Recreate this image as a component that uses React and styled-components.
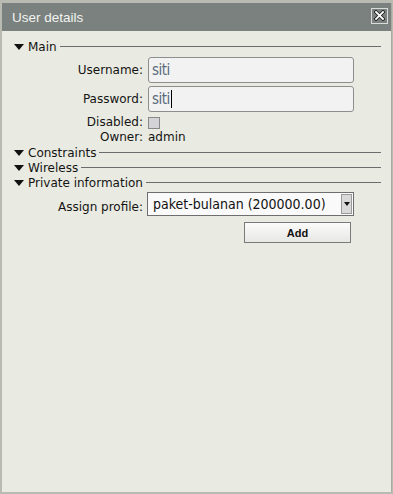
import React from 'react';
import styled, { createGlobalStyle } from 'styled-components';

const Global = createGlobalStyle`
  html, body { margin: 0; padding: 0; background: #b9bab2; }
  body { font-family: "DejaVu Sans", sans-serif; font-size: 12px; color: #141414; }
`;

const Page = styled.div`
  width: 393px;
  height: 494px;
  box-sizing: border-box;
  padding: 3px 1px 2px 2px;
  background: #b9bab2;
`;

const Win = styled.div`
  height: 100%;
  box-sizing: border-box;
  display: flex;
  flex-direction: column;
  background: #e9eae1;
  border-right: 1px solid #a9aaa2;
`;

const TitleBar = styled.div`
  height: 28px;
  flex: none;
  background: #7a817e;
  display: flex;
  align-items: center;
  justify-content: space-between;
  padding: 0 3px 0 10px;
  color: #f2f4f2;
  font-family: "Liberation Sans", sans-serif;
  font-size: 13.5px;
`;

const CloseBtn = styled.div`
  width: 15px;
  height: 14px;
  border: 1px solid #d8dcda;
  display: flex;
  align-items: center;
  justify-content: center;
  margin-top: -3px;
`;

const Body = styled.div`
  padding: 8px 10px 0 12px;
`;

const Legend = styled.div`
  display: flex;
  align-items: center;
  height: 15px;
  gap: 3px;
  &::after {
    content: "";
    flex: 1;
    height: 1px;
    background: #6c6c6c;
    margin-top: -1px;
  }
`;

const Tri = styled.span`
  width: 0;
  height: 0;
  border-left: 5px solid transparent;
  border-right: 5px solid transparent;
  border-top: 6px solid #111;
  margin-right: 1px;
`;

const Fields = styled.div`
  display: grid;
  grid-template-columns: 129px 206px;
  column-gap: 5px;
  align-items: center;
`;

const Label = styled.label`
  text-align: ${(p) => (p.$left ? 'left' : 'right')};
  line-height: 15px;
  margin-top: ${(p) => p.$top || 0}px;
`;

const Input = styled.div`
  height: 26px;
  box-sizing: border-box;
  border: 1px solid #8e8e8e;
  border-radius: 3px;
  background: #f2f2f2;
  margin-top: 3px;
  display: flex;
  align-items: center;
  padding-left: 3px;
  font-family: "DejaVu Sans Condensed", "DejaVu Sans", sans-serif;
  font-size: 15px;
  color: #5b6b7c;
  letter-spacing: -0.5px;
`;

const Caret = styled.span`
  width: 1px;
  height: 18px;
  background: #000;
  margin-left: 1px;
`;

const CheckCell = styled.div`
  height: 15px;
  margin-top: 3px;
  display: flex;
  align-items: center;
`;

const Check = styled.span`
  width: 10px;
  height: 10px;
  border: 1px solid #888;
  background: #d4d4d8;
`;

const Select = styled.div`
  height: 24px;
  box-sizing: border-box;
  border: 1px solid #6e6e6e;
  background: #fafafa;
  display: flex;
  align-items: center;
  justify-content: space-between;
  padding: 0 1px 0 5px;
  margin: 2px 0 6px -1px;
  font-family: "DejaVu Sans Condensed", "DejaVu Sans", sans-serif;
  font-size: 14px;
  color: #111;
`;

const Arrow = styled.span`
  width: 9px;
  height: 18px;
  background: #d9d9d9;
  border: 1px solid #9a9a9a;
  display: flex;
  align-items: center;
  justify-content: center;
  &::before {
    content: "";
    border-left: 3px solid transparent;
    border-right: 3px solid transparent;
    border-top: 4px solid #111;
  }
`;

const AddRow = styled.div`
  display: flex;
  padding-left: 230px;
`;

const Button = styled.button`
  width: 107px;
  height: 21px;
  border: 1px solid #7a7a7a;
  background: linear-gradient(#fbfbfb, #e7e7e4);
  font-family: "Liberation Sans", sans-serif;
  font-weight: bold;
  font-size: 11px;
  color: #111;
  padding: 0;
`;

const Section = ({ title, children }) => (
  <div>
    <Legend>
      <Tri />
      <span>{title}</span>
    </Legend>
    {children}
  </div>
);

export default function App() {
  return (
    <>
      <Global />
      <Page>
        <Win>
          <TitleBar>
            <span>User details</span>
            <CloseBtn>
              <svg width="11" height="11" viewBox="0 0 11 11">
                <path d="M2 2 L9 9 M9 2 L2 9" stroke="#1a1a1a" strokeWidth="3.4" strokeLinecap="square" />
                <path d="M2 2 L9 9 M9 2 L2 9" stroke="#fff" strokeWidth="1.8" strokeLinecap="square" />
              </svg>
            </CloseBtn>
          </TitleBar>
          <Body>
            <Section title="Main">
              <Fields>
                <Label $top={3}>Username:</Label>
                <Input>siti</Input>
                <Label $top={3}>Password:</Label>
                <Input>siti<Caret /></Input>
                <Label $top={3}>Disabled:</Label>
                <CheckCell><Check /></CheckCell>
                <Label>Owner:</Label>
                <Label as="span" $left>admin</Label>
              </Fields>
            </Section>
            <Section title="Constraints" />
            <Section title="Wireless" />
            <Section title="Private information">
              <Fields>
                <Label $top={2}>Assign profile:</Label>
                <Select>
                  <span>paket-bulanan (200000.00)</span>
                  <Arrow />
                </Select>
              </Fields>
              <AddRow>
                <Button>Add</Button>
              </AddRow>
            </Section>
          </Body>
        </Win>
      </Page>
    </>
  );
}
